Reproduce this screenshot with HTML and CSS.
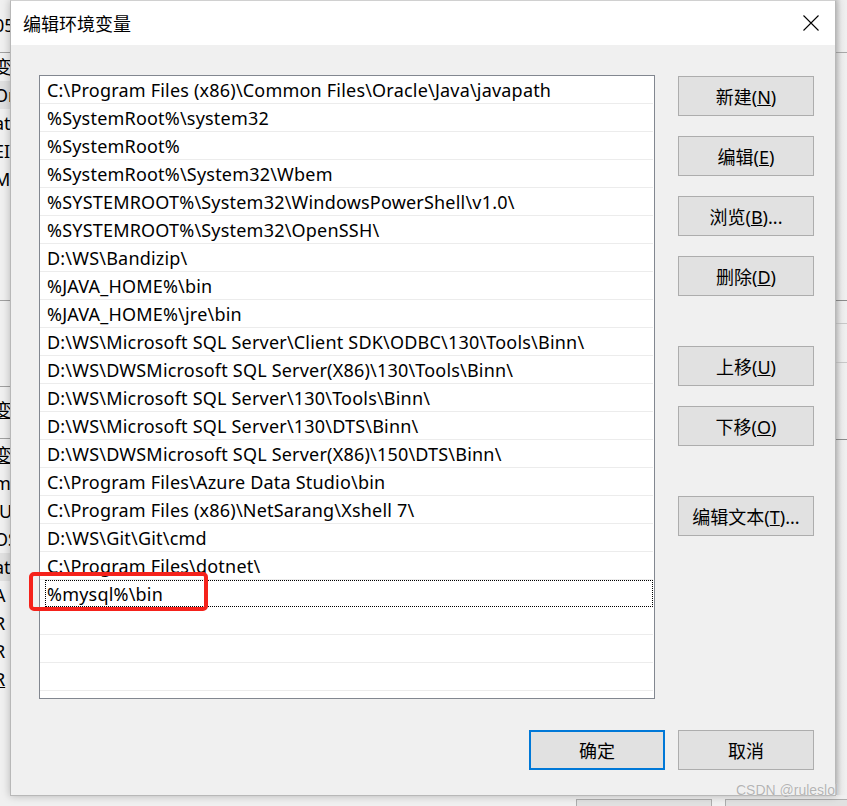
FILE: index.html
```html
<!DOCTYPE html>
<html lang="zh-CN">
<head>
    <meta charset="UTF-8">
    <title>编辑环境变量</title>
    <link rel="stylesheet" href="styles.css">
</head>
<body>
    <div class="desktop">
        <!-- window behind the dialog, only its edges show -->
        <div class="back-window">
            <div class="back-top">05</div>
            <div class="back-rows">
                <div class="back-row">变量</div>
                <div class="back-row hl">On</div>
                <div class="back-row">at</div>
                <div class="back-row">EI</div>
                <div class="back-row">M</div>
            </div>
            <div class="back-sep s1"></div>
            <div class="back-sep s2"></div>
            <div class="back-rows">
                <div class="back-row r1"><u>变</u></div>
                <div class="back-sep s3"></div>
                <div class="back-row r2"><u>变量</u></div>
                <div class="back-row">my</div>
                <div class="back-row">JU</div>
                <div class="back-row">OS</div>
                <div class="back-row hl">at</div>
                <div class="back-row">A</div>
                <div class="back-row">R</div>
                <div class="back-row">R</div>
                <div class="back-row"><u>R</u></div>
            </div>
            <div class="back-right">
                <div class="rline l1"></div>
                <div class="rline l2"></div>
                <div class="rline l3"></div>
                <div class="rline l4"></div>
                <div class="rline l5"></div>
            </div>
            <div class="back-buttons">
                <div class="back-btn one"></div>
                <div class="back-btn two"></div>
            </div>
        </div>

        <div class="dialog">
            <div class="titlebar">
                <span class="title">编辑环境变量</span>
                <svg class="close" width="16" height="16" viewBox="0 0 16 16">
                    <path d="M0.5 0.5 L15.5 15.5 M15.5 0.5 L0.5 15.5" stroke="#000" stroke-width="1.1" fill="none"/>
                </svg>
            </div>
            <div class="dialog-body">
                <div class="main">
                    <div class="path-list" id="path-list"></div>
                    <div class="side-buttons">
                        <button class="btn">新建(<u>N</u>)</button>
                        <button class="btn">编辑(<u>E</u>)</button>
                        <button class="btn">浏览(<u>B</u>)...</button>
                        <button class="btn">删除(<u>D</u>)</button>
                        <button class="btn group">上移(<u>U</u>)</button>
                        <button class="btn">下移(<u>O</u>)</button>
                        <button class="btn group">编辑文本(<u>T</u>)...</button>
                    </div>
                </div>
                <div class="footer">
                    <button class="btn default">确定</button>
                    <button class="btn">取消</button>
                </div>
            </div>
        </div>

        <div class="mark"></div>
        <div class="watermark">CSDN @ruleslol</div>
    </div>

    <script>
        const paths = [
            'C:\\Program Files (x86)\\Common Files\\Oracle\\Java\\javapath',
            '%SystemRoot%\\system32',
            '%SystemRoot%',
            '%SystemRoot%\\System32\\Wbem',
            '%SYSTEMROOT%\\System32\\WindowsPowerShell\\v1.0\\',
            '%SYSTEMROOT%\\System32\\OpenSSH\\',
            'D:\\WS\\Bandizip\\',
            '%JAVA_HOME%\\bin',
            '%JAVA_HOME%\\jre\\bin',
            'D:\\WS\\Microsoft SQL Server\\Client SDK\\ODBC\\130\\Tools\\Binn\\',
            'D:\\WS\\DWSMicrosoft SQL Server(X86)\\130\\Tools\\Binn\\',
            'D:\\WS\\Microsoft SQL Server\\130\\Tools\\Binn\\',
            'D:\\WS\\Microsoft SQL Server\\130\\DTS\\Binn\\',
            'D:\\WS\\DWSMicrosoft SQL Server(X86)\\150\\DTS\\Binn\\',
            'C:\\Program Files\\Azure Data Studio\\bin',
            'C:\\Program Files (x86)\\NetSarang\\Xshell 7\\',
            'D:\\WS\\Git\\Git\\cmd',
            'C:\\Program Files\\dotnet\\',
            '%mysql%\\bin',
            '', '', ''
        ];
        const list = document.getElementById('path-list');
        paths.forEach(function(p, i) {
            const row = document.createElement('div');
            row.className = 'path-row';
            if (i === 18) {
                row.classList.add('focused');
            }
            const text = document.createElement('span');
            text.textContent = p;
            row.appendChild(text);
            list.appendChild(row);
        });
    </script>
</body>
</html>
```

FILE: styles.css
```css
body {
    margin: 0;
    font-family: "Noto Sans", "Noto Sans CJK SC", sans-serif;
    background-color: #f0f0f0;
}
.desktop {
    position: relative;
    width: 847px;
    height: 806px;
    overflow: hidden;
    background-color: #f0f0f0;
}

/* background window */
.back-window {
    position: absolute;
    left: 0;
    top: 0;
    width: 847px;
    height: 806px;
    font-size: 18px;
    color: #000;
}
.back-top {
    height: 52px;
    line-height: 50px;
    margin-left: -6px;
    border-bottom: 1px solid #a0a0a0;
}
.back-rows {
    margin-left: -6px;
}
.back-row {
    height: 28px;
    line-height: 28px;
    white-space: nowrap;
}
.back-row.hl {
    background-color: #e0e0e0;
}
.back-row.r1 {
    margin-top: 9px;
}
.back-row.r2 {
    margin-top: 2px;
}
.back-sep {
    height: 1px;
    background-color: #a0a0a0;
}
.back-sep.s1 {
    margin-top: 107px;
}
.back-sep.s2 {
    margin-top: 85px;
}
.back-sep.s3 {
    margin: 14px 0 0 6px;
}
.back-right {
    position: absolute;
    left: 836px;
    top: 0;
    width: 11px;
    height: 795px;
    background: linear-gradient(to right, #d6d6d6, #ececec 5px, #f0f0f0);
}
.rline {
    position: absolute;
    left: 0;
    width: 11px;
    height: 1px;
    background-color: #8c8c8c;
}
.rline.l1 { top: 52px; background-color: #a8a8a8; }
.rline.l2 { top: 300px; }
.rline.l3 { top: 323px; background-color: #c8c8c8; }
.rline.l4 { top: 362px; background-color: #c8c8c8; }
.rline.l5 { top: 439px; }
.back-buttons {
    position: absolute;
    top: 799px;
    left: 0;
    width: 847px;
}
.back-btn {
    position: absolute;
    top: 0;
    height: 20px;
    border: 1px solid #adadad;
    background-color: #e1e1e1;
}
.back-btn.one { left: 576px; width: 134px; }
.back-btn.two { left: 725px; width: 134px; }

/* dialog window */
.dialog {
    position: absolute;
    left: 10px;
    top: 0;
    width: 824px;
    height: 794px;
    border: 1px solid #b8b8b8;
    border-top-color: #d0d0d0;
    background-color: #f0f0f0;
    box-shadow: 0 0 8px rgba(0, 0, 0, 0.25);
}
.titlebar {
    display: flex;
    align-items: center;
    justify-content: space-between;
    height: 44px;
    padding: 0 16px 0 12px;
    background-color: #fff;
}
.title {
    font-size: 18px;
    color: #000;
    margin-top: -1px;
}
.dialog-body {
    padding: 30px 21px 0 28px;
}
.main {
    display: flex;
    align-items: flex-start;
}
.path-list {
    width: 614px;
    height: 622px;
    border: 1px solid #828790;
    background-color: #fff;
    overflow: hidden;
}
.path-row {
    height: 27px;
    line-height: 27px;
    margin-right: 1px;
    padding-left: 7px;
    border-bottom: 1px solid #ececec;
    font-size: 18px;
    letter-spacing: 0.2px;
    color: #000;
    white-space: nowrap;
}
.path-row span {
    position: relative;
    top: 1px;
}
.path-row.focused {
    height: 25px;
    line-height: 25px;
    margin-left: 5px;
    padding-left: 1px;
    border: 1px dotted #000;
}
.side-buttons {
    display: flex;
    flex-direction: column;
    margin-left: 23px;
    margin-top: 1px;
}
.btn {
    width: 136px;
    height: 40px;
    padding: 0;
    border: 1px solid #adadad;
    background-color: #e1e1e1;
    font-family: "Noto Sans", "Noto Sans CJK SC", sans-serif;
    font-size: 18px;
    color: #000;
    margin-bottom: 20px;
}
.btn.group {
    margin-top: 30px;
}
.footer {
    display: flex;
    justify-content: flex-end;
    gap: 13px;
    margin-top: 31px;
}
.footer .btn {
    margin: 0;
}
.btn.default {
    border: 2px solid #0078d7;
}

/* red annotation drawn over the list */
.mark {
    position: absolute;
    left: 29px;
    top: 572px;
    width: 171px;
    height: 31px;
    border: 4px solid #f5221b;
    border-radius: 5px;
}
.watermark {
    position: absolute;
    left: 736px;
    top: 782px;
    font-family: "Liberation Sans", sans-serif;
    font-size: 14px;
    color: #b4b4b4;
    white-space: nowrap;
    text-shadow: 0 0 1px #fff;
}
```
